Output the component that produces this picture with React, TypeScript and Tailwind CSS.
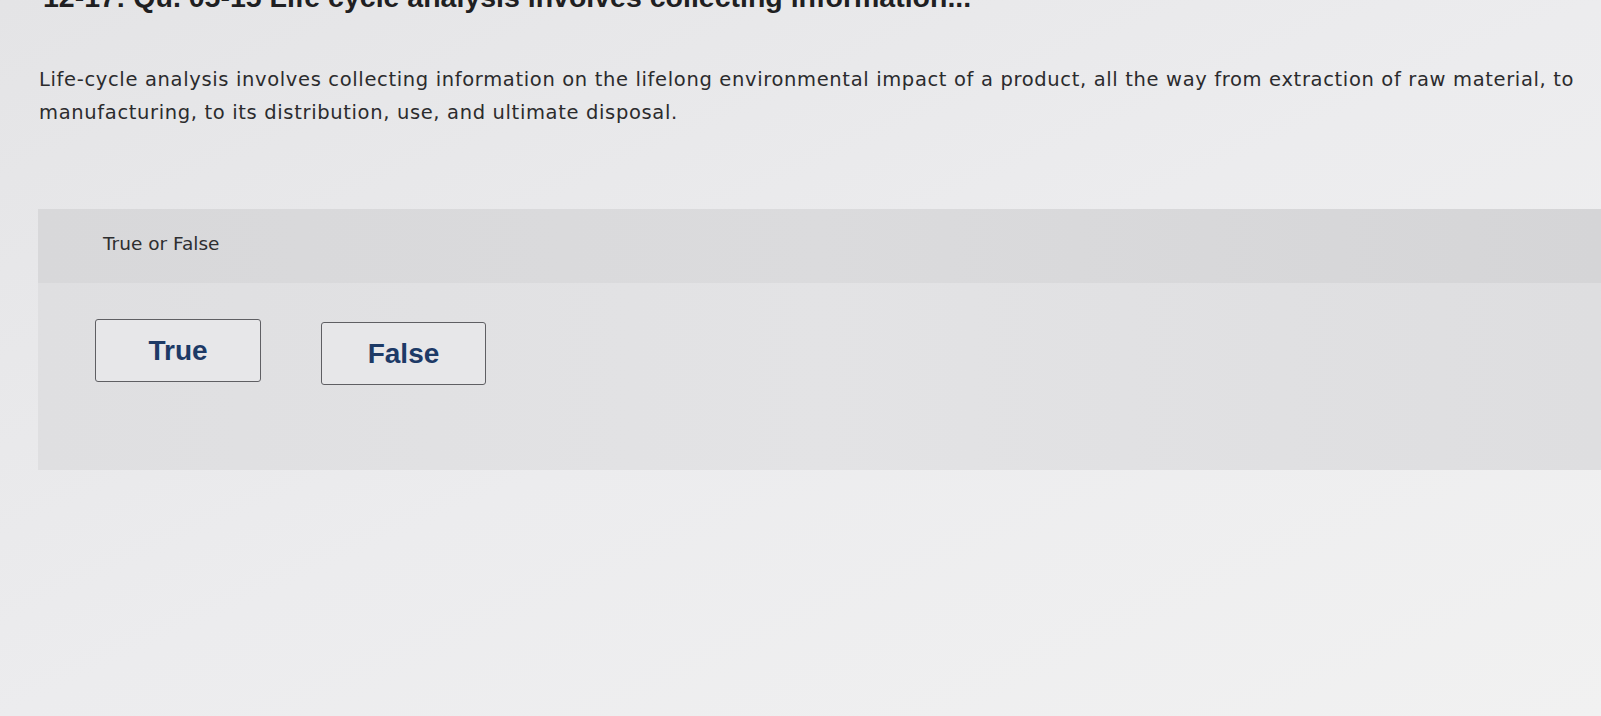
export default function App() {
    const sans = { fontFamily: '"Liberation Sans", Arial, sans-serif' };
    const wide = { fontFamily: '"DejaVu Sans", "Liberation Sans", sans-serif' };

    return (
        <div
            className="w-[1601px] h-[716px] overflow-hidden bg-gradient-to-br from-[#e4e4e6] via-[#ececee] to-[#f1f1f1] text-[#2b2b2d]"
            style={sans}
        >
            {/* cut-off title */}
            <h1 className="ml-[43px] -mt-[19px] text-[28.5px] leading-[32px] font-bold text-[#1f1f22] whitespace-nowrap">
                12-17: Qu. 05-15 Life cycle analysis involves collecting information...
            </h1>

            {/* question text */}
            <div className="pl-[39px] pt-[50px] w-[1700px]" style={wide}>
                <p className="text-[19.5px] leading-[33px] tracking-[0.65px]">
                    Life-cycle analysis involves collecting information on the lifelong environmental impact of a product, all the way from extraction of raw material, to
                    <br />
                    manufacturing, to its distribution, use, and ultimate disposal.
                </p>
            </div>

            {/* answer panel */}
            <div className="ml-[38px] mt-[80px] h-[261px] bg-gradient-to-r from-[#dfdfe1] via-[#e3e3e5] to-[#dedee0]">
                <div className="h-[74px] bg-gradient-to-r from-[#d8d8da] via-[#dbdbdd] to-[#d5d5d7] pl-[65px] pt-[21px]">
                    <span className="text-[18.5px] text-[#2e2e30]" style={wide}>True or False</span>
                </div>
                <div className="flex gap-[60px] pl-[57px] pt-[36px]">
                    <button className="w-[166px] h-[63px] border border-[#5f5f63] rounded-[3px] bg-[#e7e7e9] text-[28px] font-bold text-[#1d3a66] flex items-center justify-center">
                        True
                    </button>
                    <button className="mt-[3px] w-[165px] h-[63px] border border-[#5f5f63] rounded-[3px] bg-[#e7e7e9] text-[28px] font-bold text-[#1d3a66] flex items-center justify-center">
                        False
                    </button>
                </div>
            </div>
        </div>
    );
}
